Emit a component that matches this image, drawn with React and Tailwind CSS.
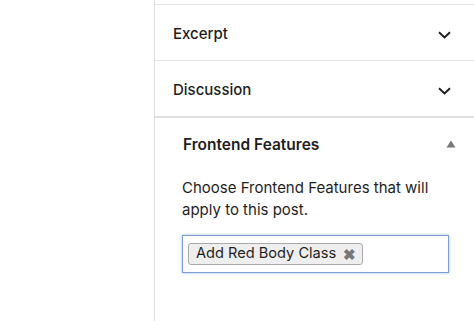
import React from 'react';

function Chevron() {
  return (
    <svg width="13" height="8" viewBox="0 0 13 8" className="mt-[1px] text-[#1e1e1e]">
      <path d="M1 1.2L6.5 6.5L12 1.2" fill="none" stroke="currentColor" strokeWidth="1.9" />
    </svg>
  );
}

function PanelRow({ title }) {
  return (
    <div className="flex h-[56px] items-center justify-between border-b border-[#e0e0e0] pl-[18px] pr-[23px] pt-[3px]">
      <span className="text-[15px] font-medium text-[#1e1e1e]">{title}</span>
      <Chevron />
    </div>
  );
}

export default function App() {
  return (
    <div className="flex h-[321px] w-[474px] overflow-hidden bg-white font-['Inter',sans-serif]">
      <div className="w-[154px] shrink-0" />
      <div className="flex-1 border-l border-[#e0e0e0]">
        <div className="h-[5px] border-b border-[#e0e0e0]" />
        <PanelRow title="Excerpt" />
        <PanelRow title="Discussion" />
        <div className="border-t border-[#e0e0e0]">
          <div className="flex items-center justify-between pl-[28px] pr-[18px] pt-[15px]">
            <span className="text-[15.5px] font-semibold text-[#1e1e1e]">Frontend Features</span>
            <svg width="10" height="8" viewBox="0 0 10 8" className="mt-[-2px]">
              <path d="M5 0.5L9.5 7.5H0.5z" fill="#777" />
            </svg>
          </div>
          <p className="mt-[21px] pl-[27px] pr-[20px] text-[15px] leading-[22px] text-[#1e1e1e]">
            Choose Frontend Features that will apply to this post.
          </p>
          <div className="ml-[27px] mt-[14px] flex h-[38px] w-[267px] items-center border border-[#7e9cd8] px-[5px] shadow-[0_0_3px_rgba(91,157,217,0.6)]">
            <span className="flex h-[22px] items-center gap-[7px] rounded-[3px] border border-[#aaa] bg-[#eee] pl-[7px] pr-[6px] text-[14.6px] text-[#1e1e1e]">
              Add Red Body Class
              <span className="text-[15px] font-bold leading-none text-[#777]">✖</span>
            </span>
          </div>
        </div>
      </div>
    </div>
  );
}
